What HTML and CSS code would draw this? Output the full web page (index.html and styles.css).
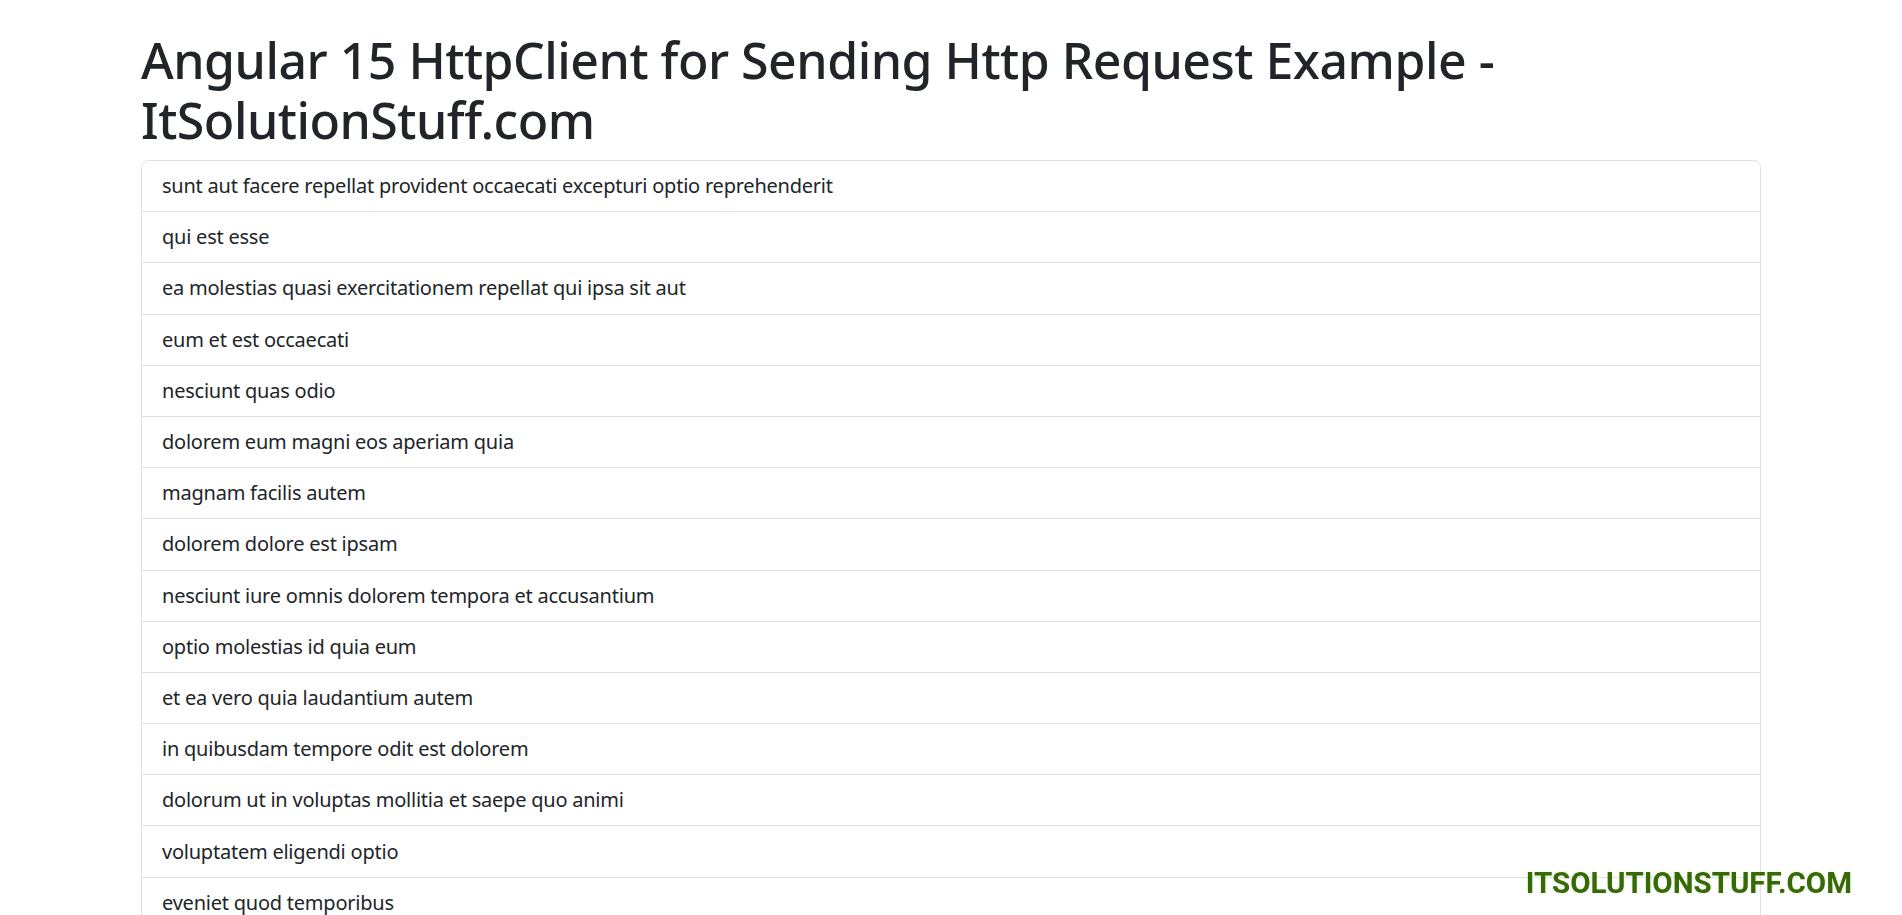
FILE: index.html
```html
<!DOCTYPE html>
<html>
  <head>
    <title>Angular 15 HttpClient for Sending Http Request Example</title>
    <link rel="stylesheet" href="styles.css">
  </head>
  <body>
    <div class="container">
      <h1>Angular 15 HttpClient for Sending Http Request Example - ItSolutionStuff.com</h1>
      <ul class="list-group">
        <li class="list-group-item">sunt aut facere repellat provident occaecati excepturi optio reprehenderit</li>
        <li class="list-group-item">qui est esse</li>
        <li class="list-group-item">ea molestias quasi exercitationem repellat qui ipsa sit aut</li>
        <li class="list-group-item">eum et est occaecati</li>
        <li class="list-group-item">nesciunt quas odio</li>
        <li class="list-group-item">dolorem eum magni eos aperiam quia</li>
        <li class="list-group-item">magnam facilis autem</li>
        <li class="list-group-item">dolorem dolore est ipsam</li>
        <li class="list-group-item">nesciunt iure omnis dolorem tempora et accusantium</li>
        <li class="list-group-item">optio molestias id quia eum</li>
        <li class="list-group-item">et ea vero quia laudantium autem</li>
        <li class="list-group-item">in quibusdam tempore odit est dolorem</li>
        <li class="list-group-item">dolorum ut in voluptas mollitia et saepe quo animi</li>
        <li class="list-group-item">voluptatem eligendi optio</li>
        <li class="list-group-item">eveniet quod temporibus</li>
        <li class="list-group-item">sint suscipit perspiciatis velit dolorum rerum ipsa laboriosam odio</li>
        <li class="list-group-item">fugit voluptas sed molestias voluptatem provident</li>
        <li class="list-group-item">voluptate et itaque vero tempora molestiae</li>
        <li class="list-group-item">adipisci placeat illum aut reiciendis qui</li>
        <li class="list-group-item">doloribus ad provident suscipit at</li>
      </ul>
    </div>

    <div class="watermark">ITSOLUTIONSTUFF.COM</div>
  </body>
</html>
```

FILE: styles.css
```css
*,
*:after,
*:before {
  box-sizing: border-box;
}

body {
  margin: 0;
  font-family: "Noto Sans", "Open Sans", sans-serif;
  font-size: 20px;
  line-height: 30px;
  letter-spacing: -0.23px;
  color: #212529;
  background: #fff;
}

.container {
  width: 1650px;
  margin: 0 auto;
  padding: 30px 15px 0;
}

h1 {
  margin: 0 0 10px;
  font-size: 50px;
  font-weight: 500;
  line-height: 60px;
  letter-spacing: -0.5px;
}

.list-group {
  list-style: none;
  margin: 0;
  padding: 0;
  border: 1px solid #dee2e6;
  border-radius: 7.5px;
}

.list-group-item {
  padding: 10.1px 20px;
  border-top: 1px solid #dee2e6;
}

.list-group-item:first-child {
  border-top: 0;
}

.watermark {
  position: fixed;
  right: 50px;
  bottom: 17px;
  font-family: Roboto, sans-serif;
  font-size: 29.5px;
  font-weight: 700;
  letter-spacing: 0;
  color: #356a05;
  text-shadow: 0 0 3px #e4f0d8;
}
```
